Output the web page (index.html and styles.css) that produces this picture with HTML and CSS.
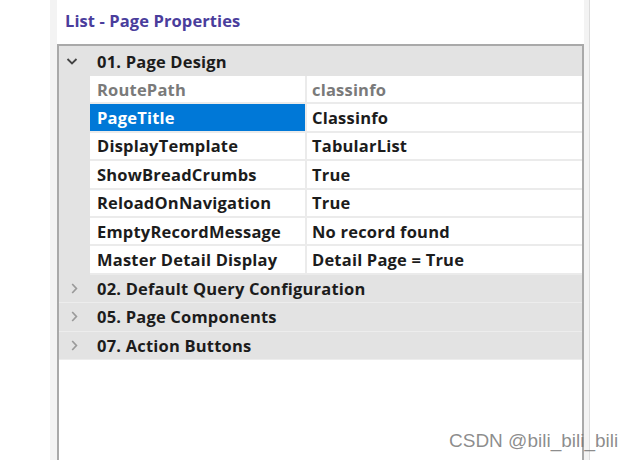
FILE: index.html
```html
<!DOCTYPE html>
<html>
<head>
<meta charset="utf-8">
<link rel="stylesheet" href="styles.css">
</head>
<body>
<div class="page">
  <div class="gap-left"></div>
  <div class="bar-left"></div>
  <div class="panel">
    <div class="title-area"><h1 class="title">List - Page Properties</h1></div>
    <div class="grid">
      <div class="cat">
        <span class="chev open"><svg width="12" height="7" viewBox="0 0 12 7"><path d="M1.5 1 L6 5.5 L10.5 1" fill="none" stroke="#444444" stroke-width="1.8"/></svg></span>
        <span class="cat-label">01. Page Design</span>
      </div>
      <div class="prop"><span class="gutter"></span><span class="name dim">RoutePath</span><span class="val dim">classinfo</span></div>
      <div class="prop"><span class="gutter"></span><span class="name sel">PageTitle</span><span class="val">Classinfo</span></div>
      <div class="prop"><span class="gutter"></span><span class="name">DisplayTemplate</span><span class="val">TabularList</span></div>
      <div class="prop"><span class="gutter"></span><span class="name">ShowBreadCrumbs</span><span class="val">True</span></div>
      <div class="prop"><span class="gutter"></span><span class="name">ReloadOnNavigation</span><span class="val">True</span></div>
      <div class="prop"><span class="gutter"></span><span class="name">EmptyRecordMessage</span><span class="val">No record found</span></div>
      <div class="prop"><span class="gutter"></span><span class="name">Master Detail Display</span><span class="val">Detail Page = True</span></div>
      <div class="cat">
        <span class="chev"><svg width="7" height="11" viewBox="0 0 7 11"><path d="M1.2 1 L5.4 5.5 L1.2 10" fill="none" stroke="#9a9a9a" stroke-width="1.7"/></svg></span>
        <span class="cat-label">02. Default Query Configuration</span>
      </div>
      <div class="cat">
        <span class="chev"><svg width="7" height="11" viewBox="0 0 7 11"><path d="M1.2 1 L5.4 5.5 L1.2 10" fill="none" stroke="#9a9a9a" stroke-width="1.7"/></svg></span>
        <span class="cat-label">05. Page Components</span>
      </div>
      <div class="cat">
        <span class="chev"><svg width="7" height="11" viewBox="0 0 7 11"><path d="M1.2 1 L5.4 5.5 L1.2 10" fill="none" stroke="#9a9a9a" stroke-width="1.7"/></svg></span>
        <span class="cat-label">07. Action Buttons</span>
      </div>
    </div>
  </div>
  <div class="bar-right"></div>
  <div class="gap-right"></div>
</div>
<div class="watermark">CSDN @bili_bili_bili</div>
</body>
</html>
```

FILE: styles.css
```css
html, body {
  margin: 0;
  padding: 0;
  background: #ffffff;
}
body {
  font-family: "Open Sans", "Noto Sans", sans-serif;
  width: 633px;
  height: 460px;
  overflow: hidden;
  position: relative;
}
.page {
  display: flex;
  height: 460px;
}
.gap-left {
  width: 50px;
  flex: none;
}
.bar-left {
  width: 7px;
  flex: none;
  background: #f3f3f3;
}
.panel {
  width: 527px;
  flex: none;
  display: flex;
  flex-direction: column;
}
.title-area {
  height: 44px;
  box-sizing: border-box;
  padding-left: 8px;
  padding-top: 10px;
}
.title {
  margin: 0;
  font-size: 16.5px;
  font-weight: 700;
  color: #4a3d9c;
  line-height: 22px;
  letter-spacing: 0.1px;
}
.grid {
  flex: 1;
  border: 2px solid #a9a9a9;
  border-bottom: none;
  background: #ffffff;
}
.cat {
  height: 28.5px;
  box-sizing: border-box;
  background: #e3e3e3;
  border-bottom: 1px solid #ededed;
  display: flex;
  align-items: center;
}
.cat:first-child {
  height: 30px;
  border-bottom: none;
}
.chev {
  width: 31px;
  flex: none;
  display: flex;
  justify-content: center;
  align-items: center;
}
.chev.open {
  justify-content: flex-start;
  padding-left: 7px;
  width: 24px;
}
.cat-label, .name, .val {
  font-size: 16.5px;
  font-weight: 700;
  color: #1c1c1c;
  letter-spacing: 0.2px;
  white-space: nowrap;
}
.cat-label {
  padding-left: 7px;
}
.prop {
  height: 28.4px;
  box-sizing: border-box;
  display: grid;
  grid-template-columns: 31px 217px 1fr;
  border-bottom: 2px solid #ebebeb;
}
.prop .gutter {
  background: #e3e3e3;
  margin-bottom: -2px;
}
.name {
  padding-left: 7px;
  display: flex;
  align-items: center;
  border-right: 2px solid #ebebeb;
}
.val {
  padding-left: 5px;
  display: flex;
  align-items: center;
}
.dim {
  color: #7a7a7a;
}
.sel {
  background: #0078d7;
  color: #ffffff;
}
.bar-right {
  width: 5px;
  flex: none;
  background: #f3f3f3;
  border-right: 1px solid #dcdcdc;
}
.gap-right {
  flex: 1;
}
.watermark {
  position: absolute;
  left: 449px;
  top: 430px;
  font-family: "Liberation Sans", Arial, sans-serif;
  font-size: 19px;
  color: rgba(120, 120, 120, 0.85);
  white-space: nowrap;
}
```
